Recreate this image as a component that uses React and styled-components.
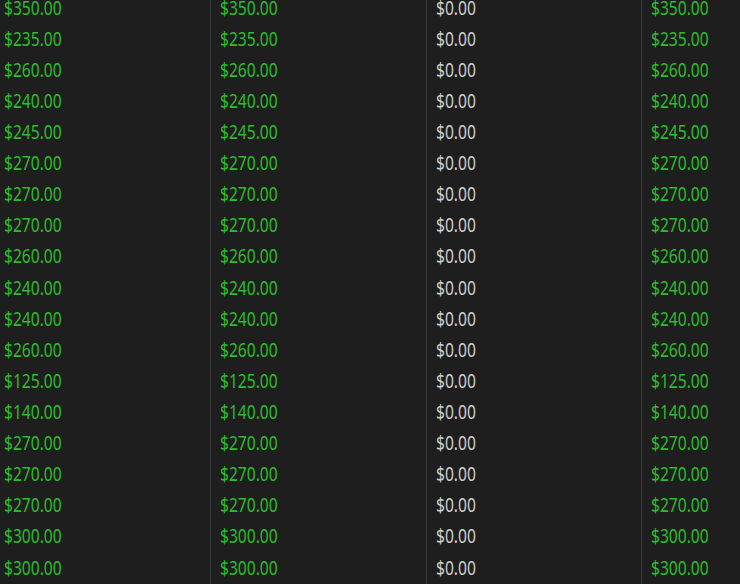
import React from "react";
import styled, { createGlobalStyle } from "styled-components";

const Global = createGlobalStyle`
  html, body { margin: 0; padding: 0; background: #1e1e1e; overflow: hidden; }
  body { width: 740px; height: 584px; }
`;

const Viewport = styled.div`
  width: 740px;
  height: 584px;
  overflow: hidden;
  background: #1e1e1e;
`;

const Table = styled.div`
  margin-top: -8px;
  display: flex;
  flex-direction: column;
`;

const Row = styled.div`
  display: grid;
  grid-template-columns: 210px 216px 215px 1fr;
  height: 31.11px;
`;

const Cell = styled.div`
  display: flex;
  align-items: center;
  padding-left: ${(p) => (p.$first ? "4px" : "9px")};
  border-left: ${(p) => (p.$first ? "none" : "1px solid #3b3b3b")};
  overflow: hidden;
`;

const Amount = styled.span`
  display: inline-block;
  font-family: "Noto Sans", "Liberation Sans", sans-serif;
  font-size: 20px;
  line-height: 1;
  color: ${(p) => (p.$zero ? "#cdcdcd" : "#2cbc2c")};
  white-space: nowrap;
  transform: scaleX(0.78);
  transform-origin: left center;
`;

const amounts = [350, 235, 260, 240, 245, 270, 270, 270, 260, 240, 240, 260, 125, 140, 270, 270, 270, 300, 300, 300];

const fmt = (n) => `$${n.toFixed(2)}`;

export default function App() {
  return (
    <Viewport>
      <Global />
      <Table>
        {amounts.map((a, i) => (
          <Row key={i}>
            <Cell $first><Amount>{fmt(a)}</Amount></Cell>
            <Cell><Amount>{fmt(a)}</Amount></Cell>
            <Cell><Amount $zero>{fmt(0)}</Amount></Cell>
            <Cell><Amount>{fmt(a)}</Amount></Cell>
          </Row>
        ))}
      </Table>
    </Viewport>
  );
}
